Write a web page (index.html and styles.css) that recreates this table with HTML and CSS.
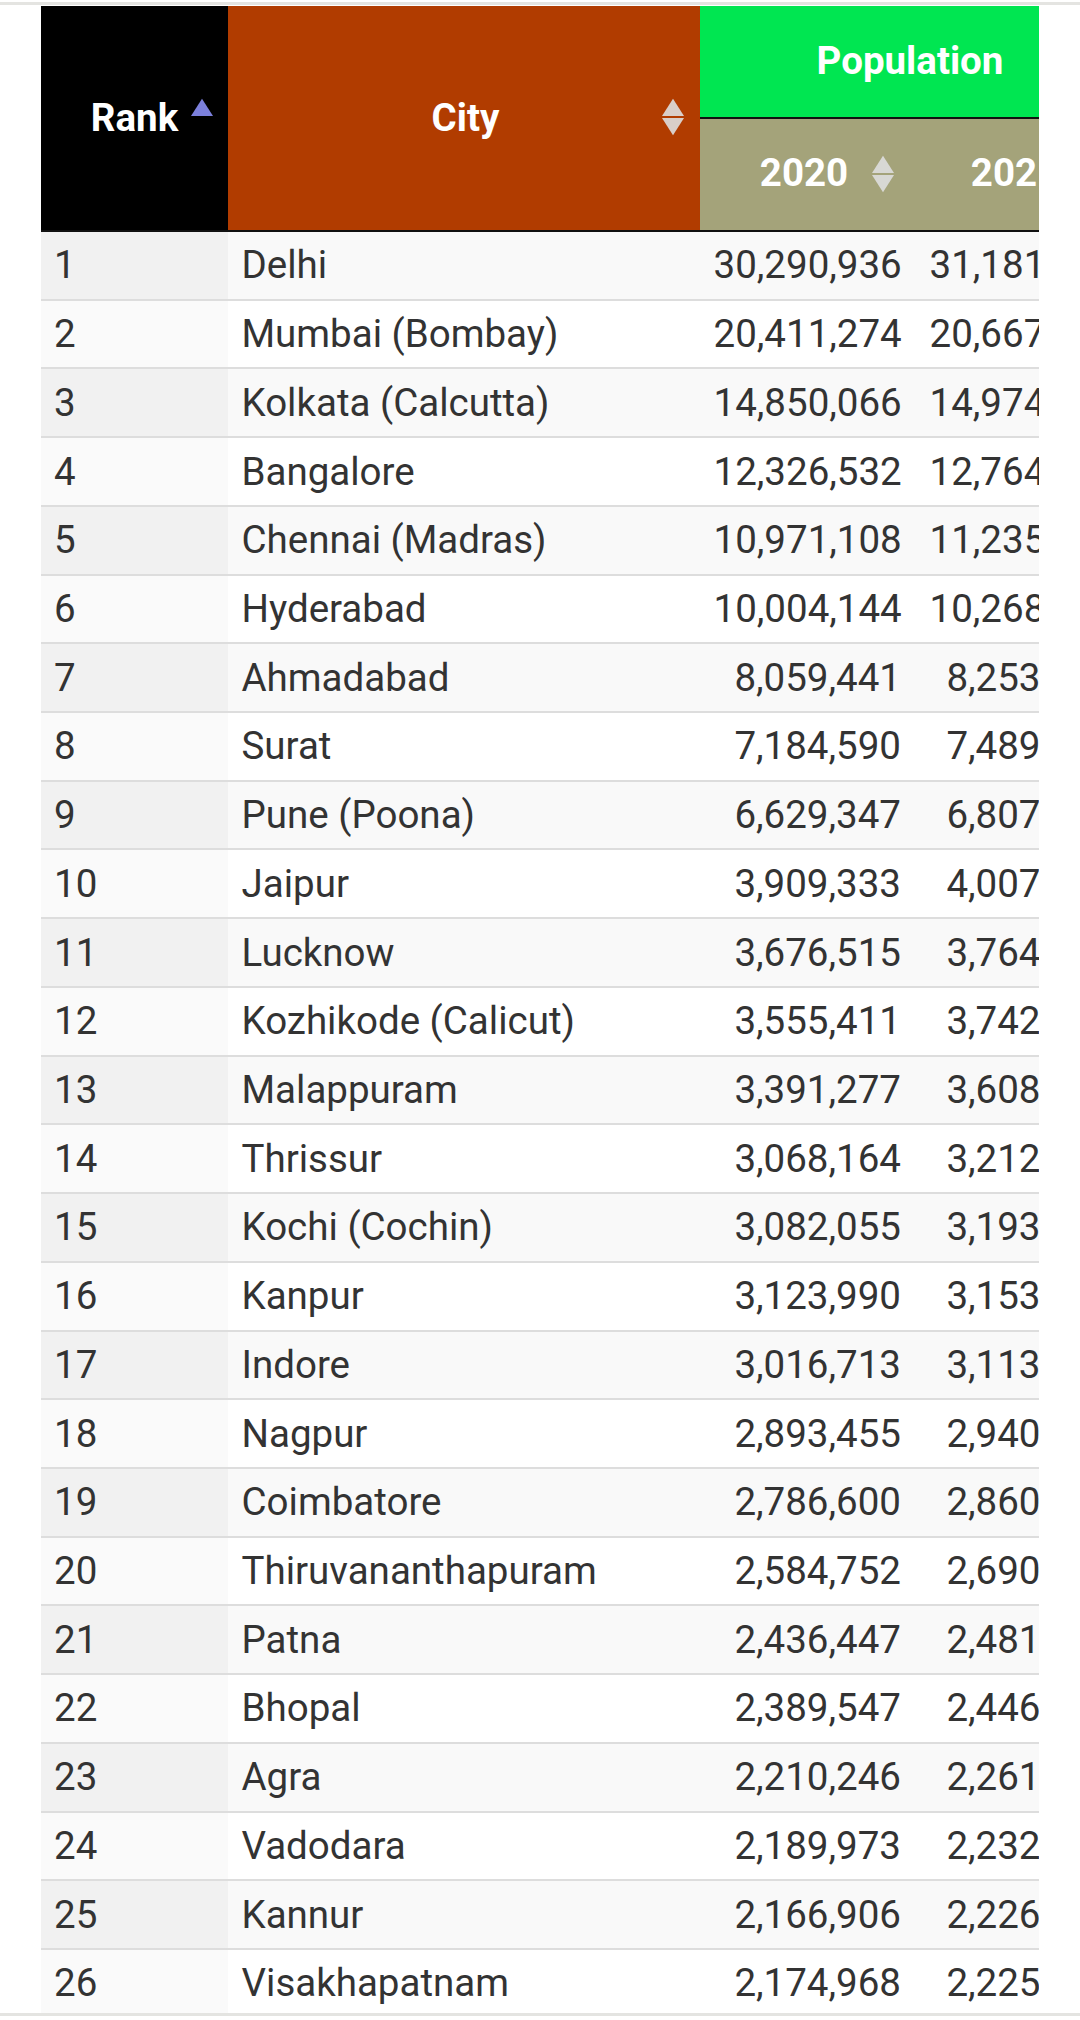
FILE: index.html
```html
<!DOCTYPE html>
<html lang="en">
<head>
<meta charset="utf-8">
<title>Largest cities in India</title>
<link rel="stylesheet" href="styles.css">
</head>
<body>
<div class="topbar"></div>
<div class="scroller">
<table class="cities">
<colgroup>
<col class="c-rank"><col class="c-city"><col class="c-y2020"><col class="c-y2021">
</colgroup>
<thead>
<tr>
<th rowspan="2" class="h-rank">Rank<svg class="sort sort-asc" viewBox="0 0 24 40"><polygon points="12,0 24,19 0,19"/></svg></th>
<th rowspan="2" class="h-city">City<svg class="sort sort-both" viewBox="0 0 24 40"><polygon points="12,0 24,19 0,19"/><polygon points="0,21 24,21 12,40"/></svg></th>
<th colspan="2" class="h-pop">Population</th>
</tr>
<tr>
<th class="h-year h-2020">2020<svg class="sort sort-both" viewBox="0 0 24 40"><polygon points="12,0 24,19 0,19"/><polygon points="0,21 24,21 12,40"/></svg></th>
<th class="h-year h-2021">2021<svg class="sort sort-both" viewBox="0 0 24 40"><polygon points="12,0 24,19 0,19"/><polygon points="0,21 24,21 12,40"/></svg></th>
</tr>
</thead>
<tbody>
<tr><td>1</td><td>Delhi</td><td>30,290,936</td><td>31,181,376</td></tr>
<tr><td>2</td><td>Mumbai (Bombay)</td><td>20,411,274</td><td>20,667,656</td></tr>
<tr><td>3</td><td>Kolkata (Calcutta)</td><td>14,850,066</td><td>14,974,073</td></tr>
<tr><td>4</td><td>Bangalore</td><td>12,326,532</td><td>12,764,935</td></tr>
<tr><td>5</td><td>Chennai (Madras)</td><td>10,971,108</td><td>11,235,018</td></tr>
<tr><td>6</td><td>Hyderabad</td><td>10,004,144</td><td>10,268,653</td></tr>
<tr><td>7</td><td>Ahmadabad</td><td>8,059,441</td><td>8,253,226</td></tr>
<tr><td>8</td><td>Surat</td><td>7,184,590</td><td>7,489,742</td></tr>
<tr><td>9</td><td>Pune (Poona)</td><td>6,629,347</td><td>6,807,984</td></tr>
<tr><td>10</td><td>Jaipur</td><td>3,909,333</td><td>4,007,096</td></tr>
<tr><td>11</td><td>Lucknow</td><td>3,676,515</td><td>3,764,698</td></tr>
<tr><td>12</td><td>Kozhikode (Calicut)</td><td>3,555,411</td><td>3,742,225</td></tr>
<tr><td>13</td><td>Malappuram</td><td>3,391,277</td><td>3,608,611</td></tr>
<tr><td>14</td><td>Thrissur</td><td>3,068,164</td><td>3,212,545</td></tr>
<tr><td>15</td><td>Kochi (Cochin)</td><td>3,082,055</td><td>3,193,044</td></tr>
<tr><td>16</td><td>Kanpur</td><td>3,123,990</td><td>3,153,736</td></tr>
<tr><td>17</td><td>Indore</td><td>3,016,713</td><td>3,113,108</td></tr>
<tr><td>18</td><td>Nagpur</td><td>2,893,455</td><td>2,940,316</td></tr>
<tr><td>19</td><td>Coimbatore</td><td>2,786,600</td><td>2,860,430</td></tr>
<tr><td>20</td><td>Thiruvananthapuram</td><td>2,584,752</td><td>2,690,275</td></tr>
<tr><td>21</td><td>Patna</td><td>2,436,447</td><td>2,481,227</td></tr>
<tr><td>22</td><td>Bhopal</td><td>2,389,547</td><td>2,446,003</td></tr>
<tr><td>23</td><td>Agra</td><td>2,210,246</td><td>2,261,493</td></tr>
<tr><td>24</td><td>Vadodara</td><td>2,189,973</td><td>2,232,542</td></tr>
<tr><td>25</td><td>Kannur</td><td>2,166,906</td><td>2,226,338</td></tr>
<tr><td>26</td><td>Visakhapatnam</td><td>2,174,968</td><td>2,225,262</td></tr>
</tbody>
</table>
</div>
<div class="bottombar"></div>
</body>
</html>
```

FILE: styles.css
```css
html, body {
  margin: 0;
  padding: 0;
  background: #ffffff;
  font-family: Roboto, "Liberation Sans", sans-serif;
}

body {
  padding-top: 2px;
  overflow: hidden;
  height: 2020px;
  box-sizing: border-box;
}

.topbar {
  height: 3px;
  background: #e4e4e1;
  margin-bottom: 1px;
}

.scroller {
  margin-left: 41px;
  width: 998px;
  overflow: hidden;
}

.cities {
  border-collapse: separate;
  border-spacing: 0;
  table-layout: fixed;
  width: 1087px;
  font-size: 38.5px;
  color: #333333;
}

.c-rank { width: 187px; }
.c-city { width: 472px; }
.c-y2020 { width: 216px; }
.c-y2021 { width: 212px; }

.cities th {
  position: relative;
  color: #ffffff;
  font-weight: 700;
  line-height: 43px;
  text-align: center;
  vertical-align: middle;
  border-bottom: 2px solid #111111;
  white-space: nowrap;
}

.cities th.h-rank {
  background: #000000;
  padding: 0 0 2px 0;
}

.cities th.h-city {
  background: #b13c00;
  padding: 0 0 2px 3px;
}

.cities th.h-pop {
  background: #00e651;
  line-height: 109px;
  padding: 0 8px 2px 0;
}

.cities th.h-year {
  background: #a4a37a;
  line-height: 108px;
}

.cities th.h-2020 { padding: 0 8px 3px 0; }
.cities th.h-2021 { padding: 0 14px 3px 0; }

.sort {
  position: absolute;
  width: 22px;
  height: 40px;
  top: 50%;
  margin-top: -21px;
}

.h-rank .sort { right: 15px; }
.h-city .sort { right: 16px; }
.h-2020 .sort { right: 22px; }
.h-2021 .sort { right: 22px; }

.sort-asc polygon { fill: #7c80dc; }
.sort-both polygon { fill: #dedede; opacity: 0.9; }

.cities td {
  line-height: 41px;
  padding: 12.37px 16px 13.37px 13.5px;
  border-bottom: 2px solid #dddddd;
  white-space: nowrap;
  overflow: hidden;
}

.cities td:nth-child(1) { padding-left: 13px; }
.cities td:nth-child(3),
.cities td:nth-child(4) { text-align: right; padding-right: 15px; }

.cities tbody tr:nth-child(odd) td { background: #f9f9f9; }
.cities tbody tr:nth-child(odd) td:first-child { background: #f1f1f1; }
.cities tbody tr:nth-child(even) td { background: #ffffff; }
.cities tbody tr:nth-child(even) td:first-child { background: #fafafa; }

.bottombar {
  position: fixed;
  left: 0;
  right: 0;
  bottom: 0;
  height: 7px;
  background: #ffffff;
  border-top: 3px solid #e4e4e1;
  box-sizing: border-box;
}
```
